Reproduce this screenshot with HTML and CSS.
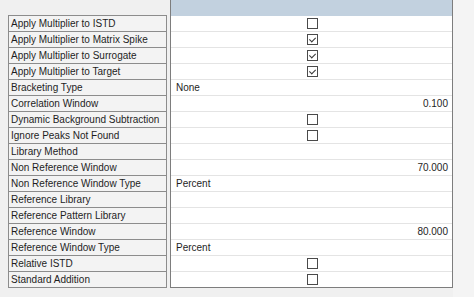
FILE: index.html
```html
<!DOCTYPE html>
<html>
<head>
<meta charset="utf-8">
<link rel="stylesheet" href="styles.css">
</head>
<body>
<div class="grid">
  <div class="names">
    <div class="name">Apply Multiplier to ISTD</div>
    <div class="name">Apply Multiplier to Matrix Spike</div>
    <div class="name">Apply Multiplier to Surrogate</div>
    <div class="name">Apply Multiplier to Target</div>
    <div class="name">Bracketing Type</div>
    <div class="name">Correlation Window</div>
    <div class="name">Dynamic Background Subtraction</div>
    <div class="name">Ignore Peaks Not Found</div>
    <div class="name">Library Method</div>
    <div class="name">Non Reference Window</div>
    <div class="name">Non Reference Window Type</div>
    <div class="name">Reference Library</div>
    <div class="name">Reference Pattern Library</div>
    <div class="name">Reference Window</div>
    <div class="name">Reference Window Type</div>
    <div class="name">Relative ISTD</div>
    <div class="name last">Standard Addition</div>
  </div>
  <div class="values">
    <div class="head"></div>
    <div class="val center"><span class="cb"></span></div>
    <div class="val center"><span class="cb on"></span></div>
    <div class="val center"><span class="cb on"></span></div>
    <div class="val center"><span class="cb on"></span></div>
    <div class="val">None</div>
    <div class="val num">0.100</div>
    <div class="val center"><span class="cb"></span></div>
    <div class="val center"><span class="cb"></span></div>
    <div class="val"></div>
    <div class="val num">70.000</div>
    <div class="val">Percent</div>
    <div class="val"></div>
    <div class="val"></div>
    <div class="val num">80.000</div>
    <div class="val">Percent</div>
    <div class="val center"><span class="cb"></span></div>
    <div class="val center last"><span class="cb"></span></div>
  </div>
  <div class="side"></div>
</div>
</body>
</html>
```

FILE: styles.css
```css
html, body {
  margin: 0;
  padding: 0;
  background: #f0f0f0;
  font-family: "Liberation Sans", Arial, sans-serif;
  font-size: 10px;
  color: #1e1e1e;
}
.grid {
  display: flex;
  align-items: flex-start;
  padding-left: 8px;
  height: 297px;
  box-sizing: border-box;
}
.names {
  margin-top: 15px;
  width: 159px;
  flex: none;
}
.name {
  height: 15px;
  line-height: 15px;
  border: 1px solid #8c8c8c;
  border-bottom: none;
  background: #f3f3f3;
  padding-left: 2px;
  white-space: nowrap;
  overflow: hidden;
}
.name.last {
  border-bottom: 1px solid #8c8c8c;
}
.values {
  margin-left: 3px;
  width: 281px;
  flex: none;
  border-left: 1px solid #7d7d7d;
  border-right: 1px solid #7d7d7d;
  background: #fff;
}
.head {
  height: 16px;
  background: #c2d1df;
}
.val {
  height: 15px;
  line-height: 15px;
  border-bottom: 1px solid #e4e4e4;
  padding: 0 4px 0 5px;
  white-space: nowrap;
}
.val.last {
  border-bottom-color: #7d7d7d;
}
.val.num {
  text-align: right;
}
.val.center {
  display: flex;
  justify-content: center;
  align-items: center;
}
.cb {
  display: block;
  width: 9px;
  height: 9px;
  border: 1px solid #4a4a4a;
  background: #fff;
  position: relative;
}
.cb.on::after {
  content: "";
  position: absolute;
  left: 2px;
  top: 0px;
  width: 5px;
  height: 3px;
  border-left: 1.3px solid #3a3a3a;
  border-bottom: 1.3px solid #3a3a3a;
  transform: translate(-0.5px, 2px) rotate(-45deg);
}
.side {
  flex: 1;
  align-self: stretch;
  background: #f4f4f4;
}
```
